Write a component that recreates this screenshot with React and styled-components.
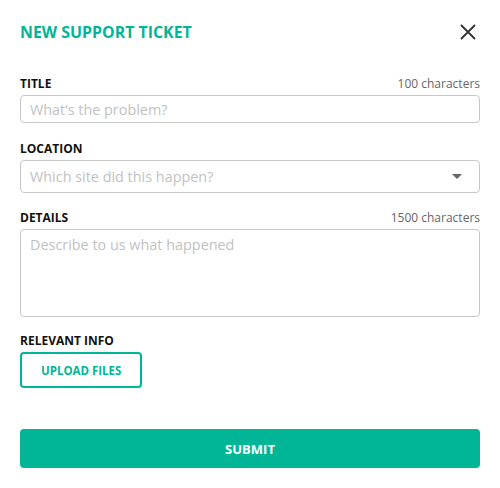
import { createGlobalStyle, styled } from "styled-components";

const GlobalStyle = createGlobalStyle`
  body {
    margin: 0;
    background: #fff;
    font-family: "Open Sans", "Noto Sans", sans-serif;
  }
  * { box-sizing: border-box; }
`;

const teal = "#00b696";

const Modal = styled.div`
  width: 500px;
  padding: 20px;
  display: flex;
  flex-direction: column;
`;

const Header = styled.div`
  display: flex;
  align-items: center;
  justify-content: space-between;
  height: 24px;
  margin-bottom: 31px;
`;

const Heading = styled.h2`
  margin: 0;
  font-size: 15.9px;
  font-weight: 700;
  color: ${teal};
`;

const Close = styled.button`
  border: none;
  background: none;
  padding: 0;
  margin-right: 2px;
  width: 20px;
  height: 20px;
  display: flex;
  align-items: center;
  justify-content: center;
  cursor: pointer;
`;

const Field = styled.div`
  display: flex;
  flex-direction: column;
  margin-bottom: ${({ $gap }) => ($gap === undefined ? 15 : $gap)}px;
`;

const LabelRow = styled.div`
  display: flex;
  justify-content: space-between;
  align-items: baseline;
  height: 18px;
  margin-bottom: 2px;
`;

const Label = styled.label`
  font-size: 12px;
  font-weight: 700;
  color: #111;
`;

const Hint = styled.span`
  font-size: 12px;
  color: #666;
`;

const Input = styled.input`
  width: 100%;
  height: 28px;
  border: 1px solid #c8c8c8;
  border-radius: 4px;
  padding: 0 9px;
  font-family: inherit;
  font-size: 14.4px;
  color: #333;
  &::placeholder { color: #c2c2c2; }
`;

const SelectBox = styled.div`
  height: 33px;
  border: 1px solid #c8c8c8;
  border-radius: 4px;
  padding: 0 9px;
  display: flex;
  align-items: center;
  justify-content: space-between;
  font-size: 14.4px;
  color: #c2c2c2;
`;

const Caret = styled.span`
  width: 0;
  height: 0;
  border-left: 5px solid transparent;
  border-right: 5px solid transparent;
  border-top: 5px solid #666;
  margin-right: 8px;
`;

const TextArea = styled.textarea`
  display: block;
  width: 100%;
  height: 88px;
  border: 1px solid #c8c8c8;
  border-radius: 4px;
  padding: 5px 9px;
  font-family: inherit;
  font-size: 14.4px;
  resize: none;
  &::placeholder { color: #c2c2c2; }
`;

const Outline = styled.button`
  align-self: flex-start;
  height: 36px;
  padding: 0 19px;
  border: 2px solid ${teal};
  border-radius: 4px;
  background: #fff;
  color: ${teal};
  font-family: inherit;
  font-size: 11.5px;
  font-weight: 700;
  cursor: pointer;
`;

const Submit = styled.button`
  margin-top: 41px;
  height: 39px;
  width: 100%;
  border: none;
  border-radius: 4px;
  background: ${teal};
  color: #fff;
  font-family: inherit;
  font-size: 13px;
  font-weight: 700;
  cursor: pointer;
`;

export default function App() {
  return (
    <>
      <GlobalStyle />
      <Modal>
        <Header>
          <Heading>NEW SUPPORT TICKET</Heading>
          <Close aria-label="Close">
            <svg width="16" height="16" viewBox="0 0 16 16">
              <path d="M1 1 L15 15 M15 1 L1 15" stroke="#333" strokeWidth="1.8" />
            </svg>
          </Close>
        </Header>

        <Field $gap={17}>
          <LabelRow>
            <Label>TITLE</Label>
            <Hint>100 characters</Hint>
          </LabelRow>
          <Input placeholder="What’s the problem?" />
        </Field>

        <Field $gap={16}>
          <LabelRow>
            <Label>LOCATION</Label>
          </LabelRow>
          <SelectBox>
            Which site did this happen?
            <Caret />
          </SelectBox>
        </Field>

        <Field>
          <LabelRow>
            <Label>DETAILS</Label>
            <Hint>1500 characters</Hint>
          </LabelRow>
          <TextArea placeholder="Describe to us what happened" />
        </Field>

        <Field $gap={0}>
          <LabelRow>
            <Label>RELEVANT INFO</Label>
          </LabelRow>
          <Outline>UPLOAD FILES</Outline>
        </Field>

        <Submit>SUBMIT</Submit>
      </Modal>
    </>
  );
}
